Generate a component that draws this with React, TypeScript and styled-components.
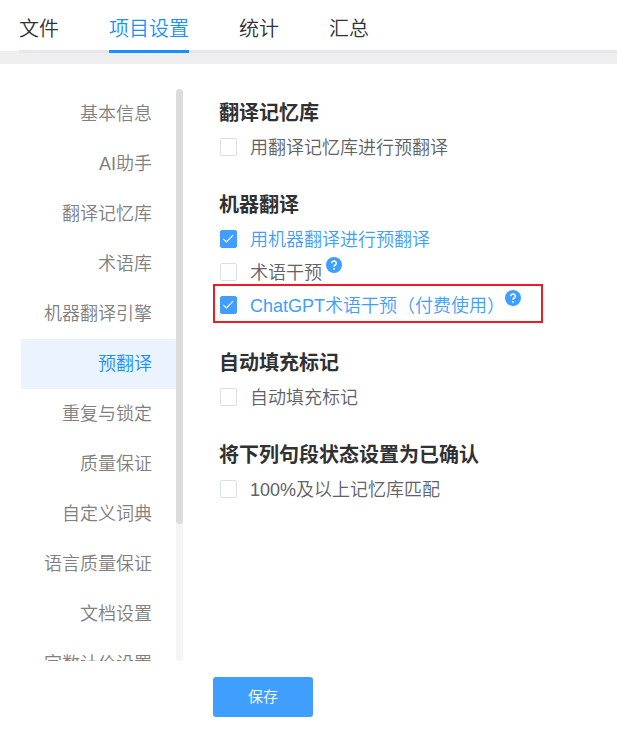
import React, { useState } from "react";
import styled, { createGlobalStyle, css } from "styled-components";

const GlobalStyle = createGlobalStyle`
  *, *::before, *::after { box-sizing: border-box; }
  body {
    margin: 0;
    background: #fff;
    color: #303133;
    font-family: "Liberation Sans", "Noto Sans CJK SC", sans-serif;
    font-weight: 350;
  }
  button, input { font: inherit; }
`;

const Header = styled.header`
  height: 51px;
  padding-left: 19px;
`;

const Tabs = styled.nav`
  position: relative;
  display: flex;
  gap: 50px;
  height: 53px;
  border-bottom: 3px solid #e4e7ed;
`;

const Tab = styled.a<{ $active: boolean }>`
  height: 53px;
  padding-top: 4px;
  border-bottom: 3px solid ${(p) => (p.$active ? "#1890ff" : "transparent")};
  color: ${(p) => (p.$active ? "#1890ff" : "#303133")};
  font-size: 20px;
  line-height: 50px;
  text-decoration: none;
  white-space: nowrap;
`;

const Band = styled.div`
  height: 13px;
  background: #efefef;
`;

const Body = styled.div`
  display: grid;
  grid-template-columns: 162px minmax(0, 1fr);
  grid-template-rows: minmax(430px, calc(100vh - 179px)) auto;
  gap: 16px 30px;
  padding: 25px 21px 34px;
`;

const Sidebar = styled.aside`
  display: flex;
  min-height: 0;
`;

const Menu = styled.nav`
  flex: 1;
  overflow-y: auto;
  scrollbar-width: none;
`;

const MenuItem = styled.a<{ $active: boolean }>`
  display: block;
  height: 50px;
  padding-right: 24px;
  background: ${(p) => (p.$active ? "#ebf3fe" : "transparent")};
  color: ${(p) => (p.$active ? "#1890ff" : "#808080")};
  font-size: 18px;
  line-height: 50px;
  text-align: right;
  text-decoration: none;
  white-space: nowrap;
`;

const Track = styled.div`
  width: 7px;
  border-radius: 4px;
  background: #f5f5f5;
`;

const Thumb = styled.div`
  height: 76%;
  border-radius: 4px;
  background: #dcdcdc;
`;

const Settings = styled.main`
  display: flex;
  flex-direction: column;
  gap: 21px;
  padding: 5px 0 0 6px;
`;

const Group = styled.section`
  display: flex;
  flex-direction: column;
  align-items: flex-start;
`;

const Title = styled.h2`
  margin: 0;
  font-size: 20px;
  font-weight: 700;
  line-height: 38px;
`;

const Row = styled.div<{ $marked?: boolean }>`
  display: flex;
  align-items: center;
  height: 33px;
  white-space: nowrap;
  ${(p) =>
    p.$marked &&
    css`
      position: relative;
      &::after {
        content: "";
        position: absolute;
        inset: -6px -22px 0 -6px;
        border: 2px solid #ed1c24;
        pointer-events: none;
      }
    `}
`;

const Label = styled.label<{ $checked: boolean }>`
  display: flex;
  align-items: center;
  gap: 12px;
  color: ${(p) => (p.$checked ? "#409eff" : "#606266")};
  font-size: 18px;
  line-height: 33px;
  cursor: pointer;
`;

const Box = styled.span`
  display: grid;
  width: 18px;
  height: 18px;
  margin: 0 0 4px 1px;
  & > * {
    grid-area: 1 / 1;
  }
`;

const Check = styled.input`
  appearance: none;
  width: 17px;
  height: 18px;
  margin: 0;
  border: 1px solid #dcdfe6;
  border-radius: 2px;
  background: #fff;
  &:checked {
    border-color: #409eff;
    background: #409eff;
  }
`;

const Tick = styled.svg`
  pointer-events: none;
`;

const Help = styled.button<{ $gap: number }>`
  align-self: flex-start;
  display: flex;
  width: 16px;
  height: 16px;
  margin-left: ${(p) => p.$gap}px;
  padding: 0;
  border: 0;
  background: none;
  cursor: pointer;
`;

const Footer = styled.footer`
  grid-column: 2;
`;

const Save = styled.button`
  width: 100px;
  height: 40px;
  padding: 0 0 3px;
  border: 0;
  border-radius: 3px;
  background: #409eff;
  color: #fff;
  font-size: 15px;
  cursor: pointer;
`;

const tabs = ["文件", "项目设置", "统计", "汇总"];

const menu = [
  "基本信息",
  "AI助手",
  "翻译记忆库",
  "术语库",
  "机器翻译引擎",
  "预翻译",
  "重复与锁定",
  "质量保证",
  "自定义词典",
  "语言质量保证",
  "文档设置",
  "字数计价设置",
];

interface Option {
  id: string;
  text: string;
  on?: boolean;
  help?: number;
  marked?: boolean;
}

const groups: { title: string; options: Option[] }[] = [
  { title: "翻译记忆库", options: [{ id: "tm", text: "用翻译记忆库进行预翻译" }] },
  {
    title: "机器翻译",
    options: [
      { id: "mt", text: "用机器翻译进行预翻译", on: true },
      { id: "term", text: "术语干预", help: 4 },
      { id: "gpt", text: "ChatGPT术语干预（付费使用）", on: true, help: 0, marked: true },
    ],
  },
  { title: "自动填充标记", options: [{ id: "fill", text: "自动填充标记" }] },
  { title: "将下列句段状态设置为已确认", options: [{ id: "match", text: "100%及以上记忆库匹配" }] },
];

function OptionRow({ option }: { option: Option }) {
  const [checked, setChecked] = useState(!!option.on);
  return (
    <Row $marked={option.marked}>
      <Label $checked={checked} htmlFor={option.id}>
        <Box>
          <Check
            id={option.id}
            type="checkbox"
            checked={checked}
            onChange={(e) => setChecked(e.target.checked)}
          />
          {checked && (
            <Tick width="18" height="18" viewBox="0 0 18 18" fill="none" aria-hidden="true">
              <path d="M3.2 8.8l3.3 3.2L13 5.2" stroke="#fff" strokeWidth="1.1" />
            </Tick>
          )}
        </Box>
        {option.text}
      </Label>
      {option.help !== undefined && (
        <Help type="button" $gap={option.help} aria-label="帮助">
          <svg width="16" height="16" viewBox="0 0 16 16" fill="none">
            <circle cx="8" cy="8" r="8" fill="#409eff" />
            <path
              d="M5.7 6.2a2.3 2.2 0 1 1 3.5 1.8C8.4 8.5 8 8.8 8 9.8"
              stroke="#fff"
              strokeWidth="1.5"
            />
            <circle cx="8" cy="11.9" r="0.9" fill="#fff" />
          </svg>
        </Help>
      )}
    </Row>
  );
}

export default function App() {
  const [tab, setTab] = useState("项目设置");
  const [page, setPage] = useState("预翻译");
  return (
    <>
      <GlobalStyle />
      <Header>
        <Tabs>
          {tabs.map((t) => (
            <Tab key={t} href="#" $active={t === tab} onClick={() => setTab(t)}>
              {t}
            </Tab>
          ))}
        </Tabs>
      </Header>
      <Band />
      <Body>
        <Sidebar>
          <Menu>
            {menu.map((m) => (
              <MenuItem key={m} href="#" $active={m === page} onClick={() => setPage(m)}>
                {m}
              </MenuItem>
            ))}
          </Menu>
          <Track>
            <Thumb />
          </Track>
        </Sidebar>
        <Settings>
          {groups.map((g) => (
            <Group key={g.title}>
              <Title>{g.title}</Title>
              {g.options.map((o) => (
                <OptionRow key={o.id} option={o} />
              ))}
            </Group>
          ))}
        </Settings>
        <Footer>
          <Save type="button">保存</Save>
        </Footer>
      </Body>
    </>
  );
}
